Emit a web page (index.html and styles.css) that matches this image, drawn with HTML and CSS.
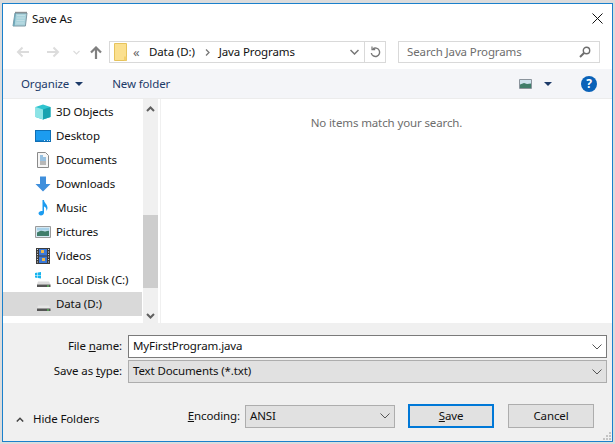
FILE: index.html
```html
<!DOCTYPE html>
<html lang="en">
<head>
<meta charset="utf-8">
<title>Save As</title>
<link rel="stylesheet" href="styles.css">
</head>
<body>
<div class="window">
  <header class="titlebar">
    <svg class="title-icon" width="16" height="16" viewBox="0 0 16 16"><path d="M3 2h12l-1.600 13H1z" fill="#a9d3dc" stroke="#7d97a3"/><path d="M4 2l-1.400 13H1L3 2z" fill="#6fa9bb"/><path d="M5 4.500h8M4.800 7h8M4.500 9.500h8M4.200 12h8" stroke="#c6e1e7" stroke-width=".8"/><path d="M3.500 1.500h11" stroke="#555" stroke-width="1.600" stroke-dasharray="1 1"/></svg>
    <span class="title-text">Save As</span>
    <svg class="close" width="11" height="11" viewBox="0 0 11 11"><path d="M.5.500l10 10M10.500.500l-10 10" stroke="#111" stroke-width="1" fill="none"/></svg>
  </header>

  <nav class="navbar">
    <svg class="nav-arrow" width="14" height="12" viewBox="0 0 14 12"><path d="M13 6H2M6.500 1.500L2 6l4.500 4.500" stroke="#dcdcdc" stroke-width="2" fill="none"/></svg>
    <svg class="nav-arrow fwd" width="14" height="12" viewBox="0 0 14 12"><path d="M1 6h11M7.500 1.500L12 6l-4.500 4.500" stroke="#dcdcdc" stroke-width="2" fill="none"/></svg>
    <svg class="nav-drop" width="7" height="5" viewBox="0 0 7 5"><path d="M.5 1l3 3 3-3" stroke="#dcdcdc" stroke-width="1.200" fill="none"/></svg>
    <svg class="nav-up" width="12" height="13" viewBox="0 0 12 13"><path d="M6 13V2M1 6.500L6 1.500l5 5" stroke="#808080" stroke-width="2.200" fill="none"/></svg>
    <div class="address">
      <svg class="addr-folder" width="13" height="18" viewBox="0 0 13 18"><path d="M.5.500h12v17H.5z" fill="#fbe08f" stroke="#e6c35c"/><path d="M10 13.500h2.500v4H10z" fill="#f3cf6c"/></svg>
      <span class="addr-more">«</span>
      <span class="addr-part">Data (D:)</span>
      <svg class="addr-sep" width="5" height="7" viewBox="0 0 5 7"><path d="M1 .5l3 3-3 3" stroke="#777" stroke-width="1.300" fill="none"/></svg>
      <span class="addr-part">Java Programs</span>
      <svg class="addr-chev" width="9" height="6" viewBox="0 0 9 6"><path d="M.5 1l4 4 4-4" stroke="#777" stroke-width="1.500" fill="none"/></svg>
      <div class="addr-refresh">
        <svg width="11" height="12" viewBox="0 0 11 12"><path d="M2.800 3A4.200 4.200 0 1 1 1.300 7" stroke="#777" stroke-width="1.400" fill="none"/><path d="M2 .5v3.200h3.200" fill="none" stroke="#777" stroke-width="1.200"/></svg>
      </div>
    </div>
    <div class="search">
      <span class="search-text">Search Java Programs</span>
      <svg width="12" height="12" viewBox="0 0 12 12"><circle cx="7.500" cy="4.500" r="3.200" stroke="#6d6d6d" stroke-width="1.400" fill="none"/><path d="M5 7l-4 4" stroke="#6d6d6d" stroke-width="2"/></svg>
    </div>
  </nav>

  <div class="toolbar">
    <span class="tool">Organize</span>
    <span class="caret organize-caret"></span>
    <span class="tool newfolder">New folder</span>
    <svg class="view-icon" width="13" height="10" viewBox="0 0 13 10"><path d="M.5.500h12v9H.5z" fill="#cfe3ee" stroke="#8b949c"/><path d="M1 5.500l4-1.500 3 1 4-.5V9H1z" fill="#3f7d6a"/></svg>
    <span class="caret view-caret"></span>
    <span class="help">?</span>
  </div>

  <div class="content">
    <div class="tree">
      <div class="tree-row">
        <svg width="16" height="16" viewBox="0 0 16 16"><path d="M8 .5l7.500 2.500v10L8 15.500.5 13V3z" fill="#2fc4cf"/><path d="M.5 3L8 5.500V15.500L.5 13z" fill="#8ce4e6"/><path d="M8 5.500L15.500 3v10L8 15.500z" fill="#17a3b0"/></svg>
        <span>3D Objects</span>
      </div>
      <div class="tree-row">
        <svg width="16" height="12" viewBox="0 0 16 12"><path d="M0 0h16v12H0z" fill="#0f6fb5"/><path d="M1 1h14v9.500H1z" fill="#1c9cf0"/><path d="M9 10.500h1M12 10.500h1M14 10.500h1" stroke="#d6ecfa"/></svg>
        <span>Desktop</span>
      </div>
      <div class="tree-row">
        <svg width="14" height="16" class="doc" viewBox="0 0 14 16"><path d="M1.500.5h8l3 3v12h-11z" fill="#f6f6f6" stroke="#8a8a8a"/><path d="M4 4h3M4 6h6M4 8h6" stroke="#3a8ccb"/><path d="M4 10h6M4 12h6" stroke="#7a7a7a"/></svg>
        <span>Documents</span>
      </div>
      <div class="tree-row">
        <svg width="16" height="16" viewBox="0 0 16 16"><path d="M5 .5h6V8h4.500L8 15.500.5 8H5z" fill="#3f8fdc"/></svg>
        <span>Downloads</span>
      </div>
      <div class="tree-row">
        <svg width="16" height="16" viewBox="0 0 16 16"><path d="M7.500 0H9c0 3 3.500 4 3.500 8 0 1-.5 2-1 3 0-3-1-4-2.500-4.500V12.500C9 14.500 7.500 15.500 6 15.500 4.500 15.500 3.500 14.500 3.500 13.300 3.500 12 5 11 6.500 11c.4 0 .7 0 1 .1z" fill="#1c9cf0"/></svg>
        <span>Music</span>
      </div>
      <div class="tree-row">
        <svg width="16" height="12" viewBox="0 0 16 12"><path d="M.5.500h15v11H.5z" fill="#d6e8f2" stroke="#9a9a9a"/><path d="M2 6.500l4-2 4 1 4-1V10H2z" fill="#3f7d6a"/><path d="M2 2h12v2.500H2z" fill="#a8d2ea"/></svg>
        <span>Pictures</span>
      </div>
      <div class="tree-row">
        <svg width="14" height="16" class="video" viewBox="0 0 14 16"><path d="M0 0h14v16H0z" fill="#3c3c3c"/><path d="M3 1h8v6.500H3z" fill="#3a78d8"/><path d="M3 8.500h8V15H3z" fill="#3a78d8"/><path d="M5 2h3v3H5zM6 10h3v3H6z" fill="#e8b54a"/><path d="M1 1h1v1H1zM1 3.500h1v1H1zM1 6h1v1H1zM1 8.500h1v1H1zM1 11h1v1H1zM1 13.500h1v1H1zM12 1h1v1h-1zM12 3.500h1v1h-1zM12 6h1v1h-1zM12 8.500h1v1h-1zM12 11h1v1h-1zM12 13.500h1v1h-1z" fill="#ddd"/></svg>
        <span>Videos</span>
      </div>
      <div class="tree-row">
        <svg width="16" height="16" viewBox="0 0 16 16"><path d="M0 1l2.500-.400V3H0zM3 .5L6 0v3H3zM0 3.500h2.500V6L0 5.500zM3 3.500h3v3l-3-.4z" fill="#16b4ee"/><path d="M3 9.500h11l1.500 3H2z" fill="#dcdcdc"/><path d="M2 12.500h13.500V15H2z" fill="#555"/><path d="M12 13.500h2v1h-2z" fill="#5fe05f"/></svg>
        <span>Local Disk (C:)</span>
      </div>
      <div class="tree-row selected">
        <svg width="16" height="16" viewBox="0 0 16 16"><path d="M3 9.500h11l1.500 3H2z" fill="#e6e6e6"/><path d="M2 12.500h13.500V15H2z" fill="#555"/><path d="M12 13.500h2v1h-2z" fill="#5fe05f"/></svg>
        <span>Data (D:)</span>
      </div>
      <div class="tree-row">
        <svg width="16" height="16" viewBox="0 0 16 16"></svg>
        <span>Removable Disk (F:)</span>
      </div>
    </div>
    <div class="scrollbar">
      <svg class="scroll-arrow" width="9" height="6" viewBox="0 0 9 6"><path d="M1 5l3.500-3.500L8 5" stroke="#606060" stroke-width="2" fill="none"/></svg>
      <div class="thumb"></div>
      <svg class="scroll-arrow" width="9" height="6" viewBox="0 0 9 6"><path d="M1 1l3.500 3.500L8 1" stroke="#606060" stroke-width="2" fill="none"/></svg>
    </div>
    <div class="main">
      <span class="empty">No items match your search.</span>
    </div>
  </div>

  <form class="bottom">
    <div class="field-row">
      <label class="field-label">File <u>n</u>ame:</label>
      <div class="combo editable">
        <span class="combo-text">MyFirstProgram.java</span>
        <svg width="10" height="6" viewBox="0 0 10 6"><path d="M.5.500l4.500 4.500 4.500-4.500" stroke="#555" fill="none"/></svg>
      </div>
    </div>
    <div class="field-row">
      <label class="field-label">Save as <u>t</u>ype:</label>
      <div class="combo">
        <span class="combo-text">Text Documents (*.txt)</span>
        <svg width="10" height="6" viewBox="0 0 10 6"><path d="M.5.500l4.500 4.500 4.500-4.500" stroke="#555" fill="none"/></svg>
      </div>
    </div>
    <div class="action-row">
      <svg class="hide-chev" width="8" height="5" viewBox="0 0 8 5"><path d="M.8 4.500L4 1.300l3.200 3.200" stroke="#444" stroke-width="1.500" fill="none"/></svg>
      <span class="hide-text">Hide Folders</span>
      <label class="encoding-label"><u>E</u>ncoding:</label>
      <div class="combo encoding">
        <span class="combo-text">ANSI</span>
        <svg width="10" height="6" viewBox="0 0 10 6"><path d="M.5.500l4.500 4.500 4.500-4.500" stroke="#555" fill="none"/></svg>
      </div>
      <button class="btn primary" type="button"><span class="btn-label"><u>S</u>ave</span></button>
      <button class="btn" type="button"><span class="btn-label">Cancel</span></button>
    </div>
    <div class="grip"><i></i><i></i><i></i><i></i><i></i><i></i></div>
  </form>
</div>
</body>
</html>
```
FILE: styles.css
```css
* { box-sizing: border-box; }
html, body { margin: 0; height: 100%; }
body {
  background: #dcdcdc;
  padding: 3px 0 0 2px;
  font-family: "Noto Sans", "Open Sans", sans-serif;
  font-size: 11.5px;
  letter-spacing: -0.12px;
  color: #111;
  overflow: hidden;
}
.window {
  position: relative;
  width: 611px;
  height: 439px;
  border: 1px solid #1a80cc;
  background: #fff;
  display: flex;
  flex-direction: column;
}
.titlebar {
  height: 31px;
  flex: none;
  display: flex;
  align-items: center;
  padding: 0 9px 2px 9px;
}
.title-text { margin-left: 4px; }
.close { margin-left: auto; }

.navbar {
  height: 34px;
  flex: none;
  display: flex;
  align-items: center;
  padding: 0 10px 0 13px;
}
.nav-arrow.fwd { margin-left: 16px; }
.nav-drop { margin-left: 13px; }
.nav-up { margin-left: 10px; }
.address {
  width: 277px;
  height: 22px;
  margin-left: 7px;
  border: 1px solid #d9d9d9;
  display: flex;
  align-items: center;
  padding-left: 4px;
}
.addr-more { margin-left: 6px; width: 10px; color: #666; font-size: 13px; line-height: 1; }
.addr-part { margin-left: 6px; margin-bottom: 2px; white-space: nowrap; }
.addr-sep { margin-left: 10px; }
.addr-sep + .addr-part { margin-left: 9px; }
.addr-chev { margin-left: auto; margin-right: 5px; }
.addr-refresh {
  width: 21px;
  height: 100%;
  border-left: 1px solid #d9d9d9;
  display: flex;
  align-items: center;
  justify-content: center;
}
.search {
  width: 202px;
  height: 22px;
  margin-left: 12px;
  border: 1px solid #d9d9d9;
  display: flex;
  align-items: center;
  justify-content: space-between;
  padding: 0 8px 0 8px;
  color: #6d6d6d;
}
.search-text { margin-bottom: 2px; }

.toolbar {
  height: 30px;
  flex: none;
  background: #f4f5f8;
  border-bottom: 1px solid #ececec;
  display: flex;
  align-items: center;
  padding: 0 15px 0 18px;
  color: #1c3a68;
}
.caret {
  width: 0;
  height: 0;
  border-left: 4px solid transparent;
  border-right: 4px solid transparent;
  border-top: 4px solid #1c3a68;
}
.organize-caret { margin-left: 6px; }
.newfolder { margin-left: 29px; }
.view-icon { margin-left: auto; }
.view-caret { margin-left: 12px; }
.help {
  width: 16px;
  height: 16px;
  margin-left: 29px;
  border-radius: 50%;
  background: #0a62b8;
  color: #fff;
  font-weight: 700;
  font-size: 12px;
  line-height: 16px;
  text-align: center;
}

.content {
  flex: 1;
  min-height: 0;
  display: flex;
}
.tree {
  width: 140px;
  flex: none;
  padding-top: 1px;
  overflow: hidden;
}
.tree-row {
  height: 24px;
  display: flex;
  align-items: center;
  padding-left: 32px;
  white-space: nowrap;
}
.tree-row span { margin-left: 5px; margin-bottom: 2px; }
.tree-row svg { flex: none; }
.tree-row .video, .tree-row .doc { margin: 0 1px; }
.tree-row.selected { background: #d9d9d9; margin-right: 1px; }
.scrollbar {
  width: 15px;
  flex: none;
  background: #f0f0f0;
  display: flex;
  flex-direction: column;
  align-items: center;
  padding: 7px 0 4px;
}
.scroll-arrow { flex: none; }
.thumb {
  width: 100%;
  height: 73px;
  margin-top: 103px;
  margin-bottom: auto;
  background: #cdcdcd;
}
.main {
  flex: 1;
  margin-left: 2px;
  border-left: 1px solid #f0f0f0;
  display: flex;
  justify-content: center;
  padding-top: 16px;
  color: #6d6d6d;
}

.bottom {
  height: 118px;
  flex: none;
  background: #f0f0f0;
  padding: 12px 0 0;
  display: flex;
  flex-direction: column;
}
.field-row {
  display: flex;
  align-items: center;
  height: 23px;
  margin-bottom: 2px;
}
.field-label {
  width: 119px;
  text-align: right;
  margin-right: 6px;
  margin-bottom: 2px;
  white-space: nowrap;
}
.combo {
  height: 23px;
  width: 479px;
  background: #e1e1e1;
  border: 1px solid #adadad;
  display: flex;
  align-items: center;
  justify-content: space-between;
  padding: 0 4px 0 4px;
}
.combo-text { margin-bottom: 2px; }
.combo.editable {
  background: #fff;
  border-color: #7a7a7a;
  padding-left: 4px;
}
.action-row {
  display: flex;
  align-items: center;
  margin-top: 19px;
  padding: 0 18px 0 13px;
}
.hide-text { margin-left: 9px; padding-top: 4px; }
.hide-chev { margin-top: 6px; }
.encoding-label { margin-left: auto; margin-right: 5px; margin-bottom: 2px; }
.combo.encoding { width: 150px; }
.btn {
  width: 86px;
  height: 24px;
  margin-left: 14px;
  background: #e1e1e1;
  border: 1px solid #adadad;
  font: inherit;
  letter-spacing: inherit;
  color: #111;
  padding: 0;
}
.btn-label { position: relative; top: -1px; }
.btn.primary {
  border: 2px solid #0078d7;
  margin-left: 13px;
}
.grip {
  position: absolute;
  right: 1px;
  bottom: 1px;
  display: grid;
  grid-template-columns: repeat(3, 2px);
  grid-template-rows: repeat(3, 2px);
  gap: 1px;
}
.grip i { background: #c4c4c4; }
.grip i:nth-child(1) { grid-area: 1 / 3; }
.grip i:nth-child(2) { grid-area: 2 / 2; }
.grip i:nth-child(3) { grid-area: 2 / 3; }
.grip i:nth-child(4) { grid-area: 3 / 1; }
.grip i:nth-child(5) { grid-area: 3 / 2; }
.grip i:nth-child(6) { grid-area: 3 / 3; }
```
